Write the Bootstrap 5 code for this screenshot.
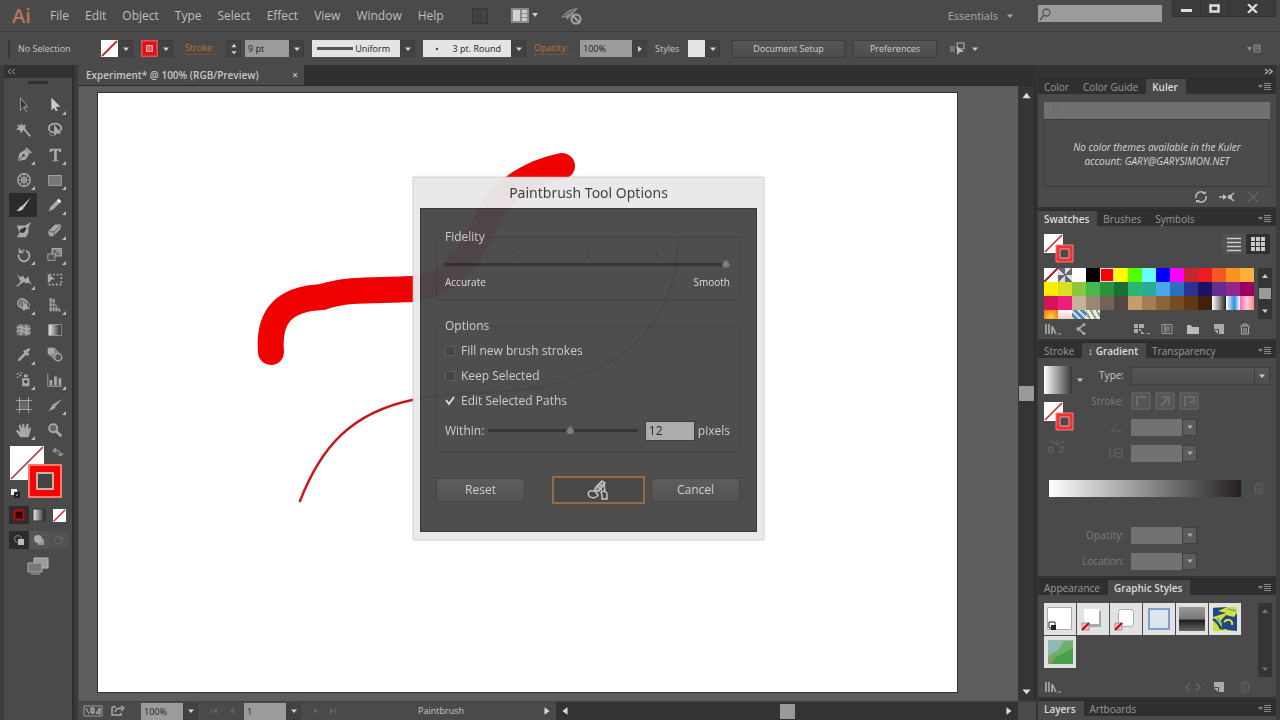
<!DOCTYPE html>
<html lang="en">
<head>
<meta charset="utf-8">
<meta name="viewport" content="width=device-width, initial-scale=1">
<title>Experiment* @ 100% (RGB/Preview)</title>
<link href="https://cdn.jsdelivr.net/npm/bootstrap@5.3.0/dist/css/bootstrap.min.css" rel="stylesheet">
<style>
:root{--panel:#4a4a4a;--dark:#323232;--edge:#3a3a3a;--txt:#c8c8c8;--field:#9b9b9b}
body{background:var(--panel);color:var(--txt);font:10px/14px "Open Sans","Noto Sans",sans-serif;overflow:hidden}
svg{display:block;flex:none}
button,input,select{font:inherit;color:inherit;border:0;border-radius:0;padding:0;margin:0;min-width:0}
button{background:none;display:flex;align-items:center;justify-content:center}
select{appearance:none}
a{text-decoration:none;color:inherit}
/* menu bar */
.menubar{height:32px;border-bottom:1px solid #3b3b3b;font-size:12px;line-height:16px;padding-left:12px}
.menubar .logo{font-size:20px;line-height:24px;font-weight:600;color:#b5775c;width:38px}
.menubar nav{gap:16px}
.menubar nav a{color:#bfbfbf}
.tools-top{gap:22px;padding-left:28px}
.workspace{color:#aaa;font-size:11px}
.search{background:var(--field);width:124px;height:17px;margin:5px 10px 0 0}
.winbtns{background:#3b3b3b;height:17px;border:1px solid #303030;border-top:0;margin-right:4px}
.winbtns button{width:28px;height:16px;border-right:1px solid #303030}
.winbtns button:last-child{width:46px;border:0}
/* control bar */
.ctrl{height:33px;gap:8px;padding:0 18px 0 8px;font-size:9px;font-weight:500}
.grip{width:2px;height:18px;background:#363636}
.sel-label{width:75px}
.cb{height:17px;display:flex}
.caret-btn{width:15px;height:17px;background:#424242;border:1px solid #3d3d3d;color:#d4d4d4}
.num{background:var(--field);color:#222;padding-left:3px;height:17px}
.w-25p{width:25px}.w-33p{width:33px}.w-38p{width:38px}
.w-44{width:44px}.w-52{width:52px}.w-88{width:88px}.w-42{width:42px}
.white-sel{background:#e4e4e4;color:#222;height:17px;text-align:right;padding-right:10px}
.uniform{background:linear-gradient(#555,#555) 5px 7px/36px 3px no-repeat #e4e4e4}
.olink{color:#c0742f;border-bottom:1px dotted #9a6135;line-height:12px}
.olink:hover{color:#de8a48}
.gbtn{height:18px;background:linear-gradient(#575757,#4d4d4d);border:1px solid #3d3d3d;color:#d0d0d0}
.w-113{width:113px}.w-84{width:84px}
.sw{width:17px;height:17px}
/* tool panel */
.toolbox{width:74px;border-left:4px solid #3d3d3d;border-right:2px solid #2e2e2e;background:var(--panel)}
.strip{height:13px;background:var(--dark)}
.tgrid{display:grid;grid-template-columns:30px 30px;padding-left:5px;gap:1px}
.tgrid button{height:24px;position:relative;color:#a9a9a9}
.tgrid button.on{background:#2b2b2b;color:#ccc;width:28px}
.tgrid button.more::after{content:"";position:absolute;right:4px;bottom:2px;border:2px solid transparent;border-right-color:#bbb;border-bottom-color:#bbb}
.fillbox{height:56px;margin:2px 6px 6px}
.modes{display:grid;grid-template-columns:repeat(3,20px);height:18px;margin:0 5px 7px}
/* document */
.doctabs{height:21px;background:#303030;border-bottom:1px solid #2a2a2a}
.doctab{background:var(--panel);padding:0 6px 0 8px;font-weight:600;white-space:nowrap;width:226px;color:#c6c6c6}
.stage{background:#5d5d5d;padding:7px 61px 9px 19px;border-left:1px solid #505050}
.artboard{background:#fff;position:relative;outline:1px solid #333;width:100%}
.artboard>svg{width:100%;height:100%;position:absolute}
.vbar{width:18px;background:#353535;border-right:2px solid #2b2b2b}
.hbar{background:#333;color:#ddd;height:18px}
.thumb{width:15px;height:15px;background:#999}
.status{height:19px;background:var(--panel);border-top:1px solid #424242;font-size:9px}
.status .left{width:478px;gap:7px;padding-left:5px}
/* dialog */
.dlg{position:absolute;left:315px;top:84px;width:351px;background:#e9e9e9;opacity:.97;border:1px solid #d8d8d8;padding:0 6px 7px;font-size:12px;line-height:16px;box-shadow:0 0 2px #bbb}
.dlg h1{font:14px/30px "Noto Sans","Open Sans",sans-serif;text-align:center;color:#3c3c3c;margin:0}
.dlg form{background:#494949;border:1px solid #333;padding:20px 16px 27px 15px;color:#ccc}
.dlg fieldset{border:1px solid #3e3e3e;padding:0 9px 9px 8px;border-radius:2px}
.dlg fieldset.opts{margin-top:18px;padding-bottom:7px}
.dlg legend{float:none;width:auto;font-size:12px;line-height:16px;margin:0;padding:0 2px 0 0}
.opts legend{margin-bottom:4px}
.dlg input[type=range]{appearance:none;background:none;height:12px;display:block}
.dlg input[type=range]::-webkit-slider-runnable-track{height:3px;background:#303030}
.dlg input[type=range]::-webkit-slider-thumb{appearance:none;width:8px;height:8px;margin-top:-3px;background:#7a7a7a;clip-path:polygon(50% 0,100% 60%,80% 100%,20% 100%,0 60%)}
.ticks{height:5px;padding:0 4px}
.ticks i{width:1px;background:#383838}
.dlg .cap{font-size:10px;line-height:16px;color:#ddd}
.chk{height:25px;gap:6px}
.chk input{appearance:none;width:10px;height:10px;background:#3e3e3e;border:1px solid #595959}
.chk input:checked{background:url("data:image/svg+xml,%3Csvg xmlns='http://www.w3.org/2000/svg' viewBox='0 0 10 10'%3E%3Cpath d='M1 4l3 4 5-7' fill='none' stroke='%23ddd' stroke-width='1.8'/%3E%3C/svg%3E");border:0}
.dlg .px{width:48px;height:18px;background:#aaa;color:#222;padding-left:3px;outline:1px solid #383838}
.dlg .act{width:89px;height:24px;background:linear-gradient(#585858,#4e4e4e);border:1px solid #3f3f3f}
.dlg .act.ok{width:93px;height:28px;background:#444;border:2px solid #96663c;margin-right:6px}
/* right dock */
.dock{width:244px;background:var(--panel);border-left:2px solid #353535;border-right:4px solid #3d3d3d;overflow:hidden}
.ptabs{height:16px;background:#303030;border-top:1px solid #292929;color:#999;padding-right:4px}
.ptabs button{padding:0 8px 0 6px;height:15px}
.ptabs button.tab-on{background:var(--panel);color:#ddd;font-weight:600}
.pbody{border-bottom:3px solid #323232;padding:0 6px}
.foot{height:20px;color:#ababab}
.kfield{background:#707070;height:17px;width:100%;padding-left:6px}
.kmsg{height:68px;border:1px solid #3b3b3b;font-style:italic;color:#d5d5d5;text-align:center;padding-top:20px}
.swgrid{display:grid;grid-template-columns:repeat(15,14px);grid-auto-rows:14px;height:51px;overflow:hidden}
.swgrid button{display:block}
.swgrid .pick{outline:1px solid #ddd;outline-offset:-1px;border:1px solid #a22}
.sbar{width:14px;background:#353535;color:#ccc;margin-right:-2px}
.sbar span{width:12px;height:11px;background:#999}
.viewb button{width:24px;height:20px}
.grow{height:26px;gap:7px}
.grow label,.grow .lb{width:42px;text-align:right}
.dimtxt{color:#7c7c7c}
.dimtxt .caret-btn{background:#5c5c5c;color:#aaa}
.numd{background:#727272;height:17px;width:51px}
.ramp{height:44px}
.stops{padding:12px 0 2px 38px}
.gbar{height:17px;background:linear-gradient(90deg,#fff,#231f20);width:194px;border:1px solid #444;border-width:0 1px}
.gs{display:grid;grid-template-columns:repeat(6,32px);gap:1px}
.gs button{height:32px;background:#e2e2e2}
</style>
</head>
<body class="vh-100 d-flex flex-column">
<svg width="0" height="0" class="position-absolute" aria-hidden="true"><defs>
<symbol id="dn" viewBox="0 0 8 8"><path d="M1 2.500h6L4 6z" fill="currentColor"/></symbol>
<symbol id="up" viewBox="0 0 8 8"><path d="M1 6h6L4 2z" fill="currentColor"/></symbol>
<symbol id="rt" viewBox="0 0 8 8"><path d="M2 1v6l4-3z" fill="currentColor"/></symbol>
<symbol id="lf" viewBox="0 0 8 8"><path d="M6 1v6L2 4z" fill="currentColor"/></symbol>
<symbol id="pm" viewBox="0 0 14 10"><path d="M0 3h5L2.500 6z" fill="#888"/><path d="M6 1.500h7M6 3.500h7M6 5.500h7M6 7.500h7" stroke="#888"/></symbol>
<symbol id="none" viewBox="0 0 17 17"><path d="M0 0h17v17H0z" fill="#fff"/><path d="M1 16L16 1" stroke="#c1282c" stroke-width="1.800"/></symbol>
<symbol id="fs" viewBox="0 0 30 29"><path d="M0 0h19v19H0z" fill="#fff"/><path d="M1 18L18 1" stroke="#c1282c" stroke-width="1.600"/><path d="M12 11h17v17H12z" fill="#e33" stroke="#f08080"/><path d="M16 15h9v9h-9z" fill="#4a4a4a" stroke="#f5a0a0"/></symbol>
<symbol id="lib" viewBox="0 0 18 14"><path d="M2 2v10M5 2v10M8 4l4 8M8 5v7" stroke="currentColor" stroke-width="1.600" fill="none"/><path d="M14 12h3" stroke="currentColor"/></symbol>
<symbol id="trash" viewBox="0 0 14 14"><path d="M2 4h10M5 4V2h4v2M3.500 5v7h7V5M6 6v5M8 6v5" stroke="currentColor" fill="none"/></symbol>
<symbol id="newp" viewBox="0 0 14 14"><path d="M2 2h10v10H7V7H2z" fill="currentColor"/><path d="M2 8h4v4z" fill="currentColor"/></symbol>
<symbol id="share" viewBox="0 0 18 14"><path d="M9 7l5-5M9 7l5 5" stroke="currentColor" stroke-width="1.500"/><circle cx="8.500" cy="7" r="2" fill="currentColor"/><circle cx="14" cy="2.500" r="1.500" fill="currentColor"/><circle cx="14" cy="11.500" r="1.500" fill="currentColor"/></symbol>
</defs></svg>

<header class="menubar d-flex align-items-center flex-shrink-0">
  <span class="logo">Ai</span>
  <nav class="d-flex" aria-label="Main menu"><a href="#">File</a><a href="#">Edit</a><a href="#">Object</a><a href="#">Type</a><a href="#">Select</a><a href="#">Effect</a><a href="#">View</a><a href="#">Window</a><a href="#">Help</a></nav>
  <div class="tools-top d-flex align-items-center">
    <button aria-label="Bridge"><svg width="16" height="16" viewBox="0 0 16 16"><path d="M1 1h14v14H1z" fill="#464646" stroke="#363636" stroke-width="1.500"/><path d="M5 4v8M5 4h4v4H5M5 8h5v4H5" stroke="#3a3a3a" fill="none"/></svg></button>
    <button aria-label="Arrange documents"><svg width="28" height="16" viewBox="0 0 28 16"><path d="M1 0h18v15H1z" fill="#8a8a8a"/><path d="M3 2h7v11H3z" fill="#d2d2d2"/><path d="M12 2h5v3h-5zM12 6h5v3h-5zM12 10h5v3h-5z" fill="#ccc"/><path d="M22 5h6l-3 4z" fill="#ccc"/></svg></button>
    <button aria-label="GPU preview"><svg width="24" height="18" viewBox="0 0 24 18"><path d="M1 11C4 6 9 2 18 1l-4 5-6 7-3-3z" fill="#8b8b8b"/><path d="M4 9l10-6M8 12l8-8" stroke="#4a4a4a"/><circle cx="16" cy="12" r="4.500" fill="#4a4a4a" stroke="#a5a5a5" stroke-width="2"/><path d="M12 8l8 8" stroke="#a5a5a5" stroke-width="2"/></svg></button>
  </div>
  <button class="workspace ms-auto me-4 gap-2">Essentials <svg width="8" height="8"><use href="#dn"/></svg></button>
  <label class="search d-flex align-items-center align-self-start"><svg width="14" height="14" viewBox="0 0 14 14"><circle cx="8.500" cy="5.500" r="3.500" fill="none" stroke="#555" stroke-width="1.300"/><path d="M6 8l-4 5" stroke="#555" stroke-width="1.600"/></svg><input class="bg-transparent w-75" aria-label="Search"></label>
  <div class="winbtns d-flex align-self-start">
    <button aria-label="Minimize"><svg width="11" height="11"><path d="M0 6h11v3H0z" fill="#ddd"/></svg></button>
    <button aria-label="Maximize"><svg width="11" height="9"><path d="M1.500 1.500h8v6h-8z" fill="none" stroke="#ddd" stroke-width="2.500"/></svg></button>
    <button aria-label="Close"><svg width="11" height="9"><path d="M1 0l9 9M10 0L1 9" stroke="#ddd" stroke-width="2.200"/></svg></button>
  </div>
</header>

<div class="ctrl d-flex align-items-center flex-shrink-0">
  <span class="grip"></span><span class="sel-label">No Selection</span>
  <div class="cb"><button class="sw" aria-label="Fill"><svg width="17" height="17"><use href="#none"/></svg></button><button class="caret-btn" aria-label="Fill menu"><svg width="8" height="8"><use href="#dn"/></svg></button></div>
  <div class="cb"><button class="sw" aria-label="Stroke colour"><svg width="17" height="17" viewBox="0 0 17 17"><path d="M0 0h17v17H0z" fill="#e35050"/><path d="M1.500 1.500h14v14h-14z" fill="#e01018"/><path d="M5.500 5.500h6v6h-6z" fill="#d66" stroke="#f5b5b5"/></svg></button><button class="caret-btn" aria-label="Stroke menu"><svg width="8" height="8"><use href="#dn"/></svg></button></div>
  <a href="#" class="olink w-33p ms-1">Stroke:</a>
  <div class="cb"><button class="caret-btn flex-column" aria-label="Step"><svg width="8" height="7"><use href="#up"/></svg><svg width="8" height="7"><use href="#dn"/></svg></button><input class="num w-44 ms-1" value="9 pt" aria-label="Stroke weight"><button class="caret-btn" aria-label="Weights"><svg width="8" height="8"><use href="#dn"/></svg></button></div>
  <div class="cb"><select class="white-sel uniform w-88" aria-label="Profile"><option>Uniform</option></select><button class="caret-btn" aria-label="Profiles"><svg width="8" height="8"><use href="#dn"/></svg></button></div>
  <div class="cb"><select class="white-sel w-88" aria-label="Brush"><option>•&nbsp;&nbsp;&nbsp;&nbsp;&nbsp; 3 pt. Round</option></select><button class="caret-btn" aria-label="Brushes"><svg width="8" height="8"><use href="#dn"/></svg></button></div>
  <a href="#" class="olink w-38p">Opacity:</a>
  <div class="cb"><input class="num w-52" value="100%" aria-label="Opacity"><button class="caret-btn" aria-label="Opacity slider"><svg width="8" height="8"><use href="#rt"/></svg></button></div>
  <span class="w-25p">Styles</span>
  <div class="cb"><button class="sw white-sel" aria-label="Style"></button><button class="caret-btn" aria-label="Style menu"><svg width="8" height="8"><use href="#dn"/></svg></button></div>
  <button class="gbtn w-113 ms-1">Document Setup</button>
  <button class="gbtn w-84">Preferences</button>
  <button class="gap-1 ms-1" aria-label="Select similar"><svg width="18" height="16" viewBox="0 0 18 16"><path d="M1 5h5v6H1z" fill="#777"/><path d="M8 2h7v6H8z" fill="none" stroke="#bbb"/><path d="M8 5v9l3-3h4z" fill="#bbb"/></svg><svg width="8" height="8"><use href="#dn"/></svg></button>
  <button class="ms-auto" aria-label="Bar options"><svg width="15" height="12" viewBox="0 0 15 12"><path d="M0 4h5L2.500 8z" fill="#909090"/><path d="M7 2h6v7H7zM8 4h5M8 6h5" fill="none" stroke="#909090"/></svg></button>
</div>

<main class="d-flex flex-fill" style="min-height:0">
  <aside class="toolbox flex-shrink-0">
    <div class="strip"><svg width="14" height="13"><path d="M7 4l-3 2.500L7 9M11 4L8 6.500 11 9" fill="none" stroke="#999"/></svg></div>
    <div class="d-flex justify-content-center" style="height:15px"><svg width="20" height="8"><path d="M0 3h20v3H0z" fill="#303030"/></svg></div>
    <div id="tools" class="tgrid"></div>
    <div class="fillbox">
      <svg width="58" height="56" viewBox="0 0 58 56"><path d="M0 2h34v34H0z" fill="#fff"/><path d="M1 35L33 3" stroke="#a8262a" stroke-width="1.500"/><path d="M19 21h32v32H19z" fill="#f00" stroke="#ff7a70" stroke-width="2"/><path d="M27 29h16v16H27z" fill="#444" stroke="#c8b0a8" stroke-width="2"/><path d="M43 7q7-3 8 5M43 7l3-3M43 7l4 2M51 12l-3-2M51 12l2-3" fill="none" stroke="#999" stroke-width="1.300"/><path d="M1 45h6v6H1z" fill="#eee"/><path d="M4 48h6v6H4z" fill="#222"/><path d="M6 50h2v2H6z" fill="#777"/></svg>
    </div>
    <div class="modes"><button aria-label="Colour" style="background:#2c2c2c"><svg width="12" height="12"><path d="M1.500 1.500h9v9h-9z" fill="#300" stroke="#b01015" stroke-width="2"/></svg></button><button aria-label="Gradient"><svg width="14" height="14"><defs><linearGradient id="g1"><stop stop-color="#eee"/><stop offset="1" stop-color="#222"/></linearGradient></defs><path d="M1 1h12v12H1z" fill="url(#g1)" stroke="#333"/></svg></button><button aria-label="None"><svg width="13" height="13"><use href="#none"/></svg></button></div>
    <div class="modes"><button aria-label="Draw normal" style="background:#2c2c2c"><svg width="14" height="14"><circle cx="6" cy="6" r="3.500" fill="none" stroke="#888"/><path d="M6 6h6v6H6z" fill="#bbb"/></svg></button><button aria-label="Draw behind" style="background:#555"><svg width="14" height="14"><path d="M6 6h6v6H6z" fill="#999"/><circle cx="6" cy="6" r="4" fill="#aaa"/></svg></button><button aria-label="Draw inside" style="background:#515151"><svg width="14" height="14"><circle cx="7" cy="7" r="4" fill="none" stroke="#666"/><path d="M7 7l4-3" stroke="#777"/></svg></button></div>
    <button class="mx-auto" aria-label="Screen mode"><svg width="24" height="20" viewBox="0 0 24 20"><path d="M8 2h14v10H8z" fill="#999" stroke="#bbb"/><path d="M2 7h14v9H2z" fill="#777" stroke="#aaa"/><path d="M5 18h9" stroke="#aaa"/></svg></button>
  </aside>

  <section class="d-flex flex-column flex-fill" style="min-width:0;border-left:4px solid #3a3a3a">
    <div class="doctabs d-flex flex-shrink-0"><div class="doctab d-flex align-items-center justify-content-between"><span>Experiment* @ 100% (RGB/Preview)</span><button aria-label="Close document">×</button></div></div>
    <div class="d-flex flex-fill" style="min-height:0">
      <div class="stage d-flex flex-fill">
        <div class="artboard">
          <svg viewBox="98 93 859 599" preserveAspectRatio="xMinYMin meet" fill="none" stroke-linecap="round"><path d="M271 352C268 316 284 299 322 297C350 288 375 291 412 289C452 286 472 254 490 214C502 190 532 172 562 166" stroke="#f00000" stroke-width="26" stroke-linejoin="round"/><path d="M300 501C321 447 351 413 412 400C446 391 490 395 543 387C626 368 678 323 678 237" stroke="#c8161c" stroke-width="2.500"/></svg>
          <div class="dlg" role="dialog" aria-labelledby="dt">
            <h1 id="dt">Paintbrush Tool Options</h1>
            <form onsubmit="return false">
              <fieldset>
                <legend>Fidelity</legend>
                <div class="ticks d-flex justify-content-between mt-2"><i></i><i></i><i></i><i></i><i></i></div>
                <input type="range" class="w-100" min="0" max="4" value="4" aria-label="Fidelity">
                <div class="cap d-flex justify-content-between pt-1"><span>Accurate</span><span>Smooth</span></div>
              </fieldset>
              <fieldset class="opts">
                <legend>Options</legend>
                <label class="chk d-flex align-items-center"><input type="checkbox">Fill new brush strokes</label>
                <label class="chk d-flex align-items-center"><input type="checkbox">Keep Selected</label>
                <label class="chk d-flex align-items-center"><input type="checkbox" checked>Edit Selected Paths</label>
                <div class="d-flex align-items-center gap-1 pt-1" style="height:31px"><label for="wi">Within:</label><input id="wi" type="range" class="flex-fill" min="0" max="20" value="11"><input class="px ms-1" value="12" aria-label="Within pixels"><span>pixels</span></div>
              </fieldset>
              <div class="d-flex align-items-center mt-4"><button class="act me-auto">Reset</button><button class="act ok" aria-label="OK"><svg width="28" height="22" viewBox="0 0 28 22" fill="none" stroke="#c4c4c4" stroke-width="1.500"><path d="M17 2l3 2-6 8-5 0 2-4z" fill="#808080"/><path d="M12 7l5 4M14 5l4 3"/><path d="M8 12c-4-1-6 2-4 5 3 3 8 2 9-1l-3-4M19 5l1 8M16 13c2-2 6 0 6 2v5h-5v-4z"/></svg></button><button class="act">Cancel</button></div>
            </form>
          </div>
        </div>
      </div>
      <div class="vbar d-flex flex-column align-items-center justify-content-between flex-shrink-0 py-1"><svg width="11" height="11" color="#ddd"><use href="#up"/></svg><span class="thumb"></span><svg width="11" height="11" color="#ddd"><use href="#dn"/></svg></div>
    </div>
    <div class="status d-flex align-items-center flex-shrink-0">
      <div class="left d-flex align-items-center flex-shrink-0">
        <svg width="20" height="12" viewBox="0 0 20 12"><path d="M1 1h18v10H1z" fill="none" stroke="#999"/><path d="M3 3l3 6M8 3h3v5H8zM13 8l4-5v6z" stroke="#bbb" fill="#777"/></svg>
        <svg width="16" height="12" viewBox="0 0 16 12"><path d="M2 2h4M2 2v8h9V8M5 7c1-4 4-4 7-4M11 1l3 2-3 3" stroke="#aaa" stroke-width="1.500" fill="none"/></svg>
        <div class="cb ms-2"><input class="num w-42" value="100%" aria-label="Zoom"><button class="caret-btn" aria-label="Zoom levels"><svg width="8" height="8"><use href="#dn"/></svg></button></div>
        <svg width="32" height="10" viewBox="0 0 32 10" fill="#656565"><path d="M6 2v6h1V2zM12 2v6L8 5zM29 2v6l-4-3z"/></svg>
        <div class="cb"><input class="num w-42" value="1" aria-label="Artboard"><button class="caret-btn" aria-label="Artboards list"><svg width="8" height="8"><use href="#dn"/></svg></button></div>
        <svg width="32" height="10" viewBox="0 0 32 10" fill="#656565"><path d="M6 2v6l4-3zM22 2v6l4-3zM27 2v6h1V2z"/></svg>
        <span class="flex-fill text-center">Paintbrush</span>
        <svg width="10" height="10" color="#ddd" class="me-1"><use href="#rt"/></svg>
      </div>
      <div class="hbar d-flex flex-fill align-items-center justify-content-between px-1"><svg width="10" height="10"><use href="#lf"/></svg><span class="thumb"></span><svg width="10" height="10"><use href="#rt"/></svg></div>
      <div style="width:18px"></div>
    </div>
  </section>

  <aside class="dock flex-shrink-0">
    <div class="strip d-flex justify-content-end"><svg width="14" height="13"><path d="M3 4l3 2.500L3 9M7 4l3 2.500L7 9" fill="none" stroke="#aaa" stroke-width="1.500"/></svg></div>

    <div class="ptabs d-flex align-items-center"><button>Color</button><button>Color Guide</button><button class="tab-on">Kuler</button><svg class="ms-auto" width="14" height="10"><use href="#pm"/></svg></div>
    <div class="pbody pt-2">
      <div class="kfield d-flex align-items-center"><svg width="10" height="10" viewBox="0 0 14 14"><circle cx="8" cy="5" r="4" fill="none" stroke="#626262" stroke-width="1.500"/><path d="M5 8l-4 5" stroke="#626262" stroke-width="1.500"/></svg><input class="bg-transparent flex-fill" aria-label="Search themes"></div>
      <div class="kmsg">No color themes available in the Kuler<br>account: GARY@GARYSIMON.NET</div>
      <div class="foot d-flex align-items-center justify-content-end gap-2 pe-2">
        <svg width="18" height="14" viewBox="0 0 18 14" fill="none" stroke="#bbb" stroke-width="1.600"><path d="M4 8a5 5 0 0 1 8-5M14 6a5 5 0 0 1-8 5"/><path d="M10 4h4V1zM8 10H4v3z" fill="#bbb" stroke="none"/></svg>
        <svg width="18" height="14" viewBox="0 0 18 14" fill="none" stroke="#bbb" stroke-width="1.600"><path d="M1 7h4M11 7l5-4M11 7l5 4"/><path d="M5 4l4 3-4 3z" fill="#bbb" stroke="none"/><circle cx="12" cy="7" r="1.500" fill="#bbb"/></svg>
        <svg width="18" height="14" viewBox="0 0 18 14" fill="none" stroke="#636363" stroke-width="1.400"><path d="M4 2l10 10M14 2L4 12"/></svg>
      </div>
    </div>

    <div class="ptabs d-flex align-items-center"><button class="tab-on">Swatches</button><button>Brushes</button><button>Symbols</button><svg class="ms-auto" width="14" height="10"><use href="#pm"/></svg></div>
    <div class="pbody">
      <div class="d-flex justify-content-between pt-2" style="height:42px"><svg width="30" height="29"><use href="#fs"/></svg>
        <div class="viewb d-flex"><button aria-label="List view" style="background:#525252"><svg width="16" height="16"><path d="M1 2.500h14M1 6.500h14M1 10.500h14M1 14.500h14" stroke="#ccc" stroke-width="1.500"/></svg></button><button aria-label="Thumbnail view" style="background:#303030"><svg width="16" height="16" fill="#ccc"><path d="M1 1h4v4H1zM6 1h4v4H6zM11 1h4v4h-4zM1 6h4v4H1zM6 6h4v4H6zM11 6h4v4h-4zM1 11h4v4H1zM6 11h4v4H6zM11 11h4v4h-4z"/></svg></button></div></div>
      <div class="d-flex justify-content-between"><div class="swgrid" id="sw"></div><div class="sbar d-flex flex-column align-items-center justify-content-between py-1"><svg width="8" height="8"><use href="#up"/></svg><span></span><svg width="8" height="8"><use href="#dn"/></svg></div></div>
      <div class="foot d-flex align-items-center justify-content-between pe-3">
        <div class="d-flex gap-2"><svg width="18" height="14"><use href="#lib"/></svg><svg width="18" height="14"><use href="#share"/></svg></div>
        <div class="d-flex gap-2"><svg width="18" height="14" viewBox="0 0 18 14" fill="#aaa"><path d="M2 2h4v4H2zM7 2h5v4H7zM2 7h4v4H2zM7 7h2v2H7zM9 9l4 3H9zM15 11h3v1h-3z"/></svg><svg width="18" height="14" viewBox="0 0 18 14"><path d="M4 2.500h10v9H4zM6 5h6M6 7h6M6 9h6M7 3v8" fill="none" stroke="#999"/></svg><svg width="18" height="14" viewBox="0 0 18 14"><path d="M3 3h4l1 2h7v7H3z" fill="#bbb"/></svg><svg width="18" height="14"><use href="#newp"/></svg><svg width="18" height="14"><use href="#trash"/></svg></div>
      </div>
    </div>

    <div class="ptabs d-flex align-items-center"><button>Stroke</button><button class="tab-on">↕ Gradient</button><button>Transparency</button><svg class="ms-auto" width="14" height="10"><use href="#pm"/></svg></div>
    <div class="pbody pt-1">
      <div class="d-flex">
        <div class="d-flex flex-column pt-1" style="width:38px"><div class="d-flex align-items-center gap-1"><svg width="28" height="28" viewBox="0 0 28 28"><defs><linearGradient id="g2"><stop stop-color="#fff"/><stop offset="1" stop-color="#3a3636"/></linearGradient></defs><path d="M0 0h28v28H0z" fill="url(#g2)"/></svg><svg width="8" height="8"><use href="#dn"/></svg></div><svg class="mt-2" width="30" height="29"><use href="#fs"/></svg><svg class="mt-2 ms-1" width="18" height="16" viewBox="0 0 18 16" stroke="#686868" fill="none"><path d="M1 3h5M12 3h5M9 1v5l-3-2M9 6l3-2M1 8h4v5H1zM11 8h5l-5 5h5"/></svg></div>
        <div class="flex-fill">
          <div class="grow d-flex align-items-center"><label for="ty">Type:</label><div class="cb flex-fill"><select id="ty" class="flex-fill gbtn"></select><button class="caret-btn gbtn border-start-0" aria-label="Types"><svg width="8" height="8"><use href="#dn"/></svg></button></div></div>
          <div class="grow d-flex align-items-center dimtxt"><span class="lb">Stroke:</span><svg width="68" height="18" viewBox="0 0 68 18" fill="#555" stroke="#6c6c6c"><path d="M1 1h18v16H1zM25 1h18v16H25zM49 1h18v16H49z"/><path d="M6 14V5h9M30 14l7-8M31 5h7v8M54 14V5h9v5h-5" stroke-width="2" fill="none"/></svg></div>
          <div class="grow d-flex align-items-center dimtxt"><span class="lb d-flex justify-content-end"><svg width="16" height="14"><path d="M3 11L11 3M3 11h10" stroke="#666" fill="none"/></svg></span><div class="cb"><input class="numd" aria-label="Angle"><button class="caret-btn" aria-label="Angles"><svg width="8" height="8"><use href="#dn"/></svg></button></div></div>
          <div class="grow d-flex align-items-center dimtxt"><span class="lb d-flex justify-content-end"><svg width="16" height="14"><path d="M1 2l4 3M1 12l4-3M2 4v6M7 3h7v8H7zM7 7h7" stroke="#666" fill="none"/></svg></span><div class="cb"><input class="numd" aria-label="Aspect ratio"><button class="caret-btn" aria-label="Ratios"><svg width="8" height="8"><use href="#dn"/></svg></button></div></div>
        </div>
      </div>
      <div class="ramp d-flex align-items-center justify-content-between px-1"><div class="gbar"></div><svg width="14" height="14" color="#606060"><use href="#trash"/></svg></div>
      <div class="stops">
        <div class="grow d-flex align-items-center dimtxt"><label for="go">Opacity:</label><div class="cb"><input id="go" class="numd"><button class="caret-btn" aria-label="Opacities"><svg width="8" height="8"><use href="#dn"/></svg></button></div></div>
        <div class="grow d-flex align-items-center dimtxt"><label for="gl">Location:</label><div class="cb"><input id="gl" class="numd"><button class="caret-btn" aria-label="Locations"><svg width="8" height="8"><use href="#dn"/></svg></button></div></div>
      </div>
    </div>

    <div class="ptabs d-flex align-items-center"><button>Appearance</button><button class="tab-on">Graphic Styles</button><svg class="ms-auto" width="14" height="10"><use href="#pm"/></svg></div>
    <div class="pbody pt-2">
      <div class="d-flex justify-content-between" style="height:74px"><div class="gs align-self-start">
        <button aria-label="Default"><svg width="32" height="32" viewBox="0 0 32 32"><path d="M3.500 4.500h24v22h-24z" fill="#fff" stroke="#aaa"/><path d="M5 19h6v6H5z" fill="#fff" stroke="#222"/><path d="M7 22h5v5H7z" fill="#222"/></svg></button>
        <button aria-label="Drop shadow"><svg width="32" height="32" viewBox="0 0 32 32"><path d="M8 8h16v16H8z" fill="#aaa"/><path d="M7 6h15v15H7z" fill="#fff"/><path d="M5 20h7v7H5z" fill="#fbb" stroke="#999"/><path d="M5 27l7-7" stroke="#c00" stroke-width="2"/></svg></button>
        <button aria-label="Rounded"><svg width="32" height="32" viewBox="0 0 32 32"><rect x="8.500" y="6.500" width="15" height="17" rx="3" fill="#fff" stroke="#aaa"/><path d="M5 20h7v7H5z" fill="#fbb" stroke="#999"/><path d="M5 27l7-7" stroke="#c00" stroke-width="2"/></svg></button>
        <button aria-label="Blue outline"><svg width="32" height="32" viewBox="0 0 32 32"><path d="M6 6h20v20H6z" fill="#dde5ef" stroke="#7da0cd" stroke-width="2"/></svg></button>
        <button aria-label="Chrome"><svg width="32" height="32" viewBox="0 0 32 32"><defs><linearGradient id="g3" x2="0" y2="1"><stop stop-color="#999"/><stop offset=".5" stop-color="#777"/><stop offset=".55" stop-color="#1e1e1e"/><stop offset="1" stop-color="#666"/></linearGradient></defs><path d="M3 4h26v24H3z" fill="url(#g3)"/></svg></button>
        <button aria-label="Pattern"><svg width="32" height="32" viewBox="0 0 32 32"><path d="M4 4h24v24H4z" fill="#d5dd3a"/><path d="M4 5l14-1-9 4 8 2-13 4zM12 17l5-5 8 2 3-4v18l-9-1-6-3z" fill="#1d4788"/><path d="M4 16q5 3 8 10M16 18c4-3 8 0 6 5M19 22q-3 4-7 3" stroke="#1d4788" stroke-width="2.500" fill="none"/><path d="M15 19c4-4 9-2 8 3M21 5l4 4-1 4" stroke="#e6e030" stroke-width="2" fill="none"/><path d="M8 15l5 6M19 6l8 2" stroke="#5aa" stroke-width="1.500"/></svg></button>
        <button aria-label="Landscape"><svg width="32" height="32" viewBox="0 0 32 32"><path d="M4 4h25v24H4z" fill="#93b9b5"/><path d="M4 28V20l10-6 6-9h9v23z" fill="#6bb36a"/><path d="M4 28l8-7 17-9v16z" fill="#49a04a"/><path d="M4 22l9-4-6 10H4z" fill="#8a9a62"/></svg></button>
      </div><div class="sbar d-flex flex-column align-items-center justify-content-between py-1" style="color:#777"><svg width="8" height="8"><use href="#up"/></svg><svg width="8" height="8"><use href="#dn"/></svg></div></div>
      <div class="foot d-flex align-items-center justify-content-between pe-3"><svg width="18" height="14"><use href="#lib"/></svg><div class="d-flex gap-2"><svg width="18" height="14" viewBox="0 0 18 14"><path d="M6 3L2 7l4 4M12 3l4 4-4 4" fill="none" stroke="#666" stroke-width="1.500"/></svg><svg width="18" height="14"><use href="#newp"/></svg><svg width="18" height="14" color="#606060"><use href="#trash"/></svg></div></div>
    </div>
    <div class="ptabs d-flex align-items-center"><button class="tab-on">Layers</button><button>Artboards</button><svg class="ms-auto" width="14" height="10"><use href="#pm"/></svg></div>
  </aside>
</main>

<script src="https://cdn.jsdelivr.net/npm/bootstrap@5.3.0/dist/js/bootstrap.bundle.min.js"></script>
<script>
// [name, flyout marker, artwork on a 20x20 grid]
const F='fill="currentColor"',S='fill="none" stroke="currentColor"';
const tools=[
 ['Selection',0,`<path d="M6 2v14l4-4h4z" fill="#333" stroke="currentColor"/><path d="M10 12l3 6" stroke="currentColor"/>`],
 ['Direct Selection',1,`<path d="M6 2v14l3-3 2 4 2-1-2-4h5z" fill="#ccc"/>`],
 ['Magic Wand',0,`<path d="M7 2l1 3 4-1-1 4 2 2-4 0-2 4-2-4-4 0 3-3-2-3 4 1z" ${F}/><path d="M10 9l7 8" ${S} stroke-width="2"/>`],
 ['Lasso',0,`<ellipse cx="10" cy="8" rx="7" ry="5" ${S} stroke-width="2"/><path d="M5 13c-2 2 1 4 3 3" ${S}/><path d="M9 4v13l3-3 5 0z" ${F}/>`],
 ['Pen',1,`<path d="M3 17l2-9 7-4 4 4-4 7z" ${F}/><path d="M3 17l6-6" stroke="#444"/><circle cx="9.500" cy="10.500" r="1.500" fill="#444"/><path d="M12 2l6 6" ${S} stroke-width="2"/>`],
 ['Type',1,`<path d="M4 3h13v4h-2l-1-2h-2v11h2v1H7v-1h2V5H7L6 7H4z" ${F}/>`],
 ['Polar Grid',1,`<circle cx="10" cy="10" r="7" ${S} stroke-width="1.500"/><circle cx="10" cy="10" r="3" ${S}/><path d="M3 10h14M10 3v14M5 5l10 10M15 5L5 15" ${S}/>`],
 ['Rectangle',1,`<rect x="3" y="5" width="14" height="11" fill="#777" stroke="currentColor"/>`],
 ['Paintbrush',0,`<path d="M19 1l-8 12-2-2z" ${F}/><path d="M9 11l2 2c-2 4-6 4-9 3 4 0 3-4 7-5z" ${F}/>`],
 ['Pencil',1,`<path d="M3 17l2-5L14 3l3 3-9 9z" ${F}/><path d="M13 4l3 3" stroke="#eee" stroke-width="3"/>`],
 ['Blob Brush',0,`<path d="M2 5h9l7-4-3 6v6l-3 5H2l3-5z" ${F}/><path d="M5 10l6-3 2 1-3 5H6z" fill="#333"/>`],
 ['Eraser',1,`<path d="M2 12l8-8 7 0-1 5-8 8H4z" ${F}/><path d="M3 12h6l7-7M9 12v5" stroke="#555" fill="none"/>`],
 ['Rotate',1,`<circle cx="10" cy="11" r="6" ${S} stroke-width="2" stroke-dasharray="20 2 2 2 2 2"/><path d="M4 2v6h6z" ${F}/>`],
 ['Scale',1,`<path d="M7 3h10v8H7z" fill="#666" stroke="currentColor" stroke-width="1.500"/><path d="M2 9h8v7H2z" fill="#555" stroke="currentColor"/><path d="M10 9l5-4M11 5h4v4" ${S}/>`],
 ['Width',1,`<path d="M2 3l4 4 3-2 2 4 4-3 1 5 3 4-4-2-3 1-2-2-6 4 2-5z" ${F}/><path d="M2 17l6-5M8 10h5" ${S} stroke-width="1.500"/>`],
 ['Free Transform',0,`<path d="M2 3l8 6-5 1-3 4z" ${F}/><path d="M4 4h13v11H4z" ${S} stroke-width="2" stroke-dasharray="2 2"/>`],
 ['Shape Builder',1,`<circle cx="8" cy="8" r="5" fill="#666" stroke="currentColor" stroke-width="1.500"/><circle cx="11" cy="10" r="5" ${S}/><path d="M9 6v11l3-3 5 1z" ${F}/>`],
 ['Perspective Grid',1,`<path d="M4 2v15h13L10 8V4z" ${F}/><path d="M4 7l8 2M4 12h10M7 3v14M10 5v12M13 9v8" stroke="#555"/>`],
 ['Mesh',0,`<rect x="2" y="4" width="15" height="12" fill="#777"/><path d="M2 8q4-3 8 0t7 0M2 12q4-3 8 0t7 0M6 4q3 6 0 12M12 4q3 6 0 12" ${S} stroke-width="2"/>`],
 ['Gradient',0,`<rect x="3" y="4" width="14" height="12" fill="url(#g1)" stroke="#999"/>`],
 ['Eyedropper',1,`<path d="M3 17l1-3 7-7 2 2-7 7z" ${F}/><path d="M10 5l5 5M12 7l4-4" ${S} stroke-width="3"/>`],
 ['Blend',0,`<path d="M2 2h8l8 9-8 5-8-7z" fill="#888"/><path d="M2 2h7v7H2z" ${F}/><circle cx="13.500" cy="12.500" r="4" fill="#555" stroke="currentColor" stroke-width="1.500"/>`],
 ['Symbol Sprayer',1,`<path d="M8 8h8v9H8zM10 4h4v3h-4z" ${F}/><circle cx="12" cy="12" r="2" fill="#444"/><path d="M2 3h2M5 5h2M2 7h2M6 2h2" ${S} stroke-width="1.500"/>`],
 ['Column Graph',1,`<path d="M2 3v14h16" ${S}/><path d="M4 10h3v6H4zM9 6h3v10H9zM14 8h3v8h-3z" ${F}/>`],
 ['Artboard',0,`<rect x="5" y="5" width="10" height="10" fill="#666"/><path d="M5 1v18M15 1v18M1 5h18M1 15h18" ${S}/>`],
 ['Slice',1,`<path d="M18 3L10 12l-3-2z" ${F}/><path d="M7 10l4 3-8 4z" ${F}/>`],
 ['Hand',1,`<path d="M6 18l-5-7 2-1 3 2L4 5l2-1 2 5V3h2l1 6 2-6h2v7l2-3 1 1-3 10z" ${F}/>`],
 ['Zoom',0,`<circle cx="8" cy="8" r="4.500" fill="#666" stroke="currentColor" stroke-width="2"/><path d="M11 11l6 6" ${S} stroke-width="3"/>`]];
document.getElementById('tools').innerHTML=tools.map(([n,m,a])=>`<button aria-label="${n}" class="${m?'more':''} ${n=='Paintbrush'?'on':''}"><svg width="18" height="18" viewBox="0 0 20 20">${a}</svg></button>`).join('');
const none='linear-gradient(-45deg,#fff 45%,#c1282c 45% 55%,#fff 55%)';
const colours=[none,'repeating-conic-gradient(#ddd 0 12%,#667 12% 25%)','#fff','#000','#f00','#ff0','#5f0','#6ff','#00f','#f0f','#c1272d','#ed1c24','#f15a24','#f7931e','#fbb03b',
'#ffee00','#d9e021','#8cc63f','#45b94a','#27943c','#1a6f37','#2ab573','#2baa98','#4aa8e8','#2a72c0','#2e3192','#1b1464','#662d91','#93278f','#9e005d',
'#d4145a','#ed1e79','#c7b299','#998675','#736357','#534741','#c69c6d','#a67c52','#8c6239','#754c24','#603813','#42210b','linear-gradient(90deg,#fff,#999 50%,#222)','linear-gradient(90deg,#fff,#2b8fdd 60%,#fff)','linear-gradient(90deg,#f6b,#fcd,#f88)',
'radial-gradient(#ffd040,#f07010)','linear-gradient(#fff,#f3b0a0)','repeating-linear-gradient(45deg,#58a 0 3px,#cde 3px 5px)','repeating-linear-gradient(60deg,#8a7 0 2px,#eee 2px 5px)'];
document.getElementById('sw').innerHTML=colours.map((c,i)=>`<button aria-label="Swatch ${i+1}" class="${i==4?'pick':''}" style="background:${c}"></button>`).join('');
</script>
</body>
</html>
